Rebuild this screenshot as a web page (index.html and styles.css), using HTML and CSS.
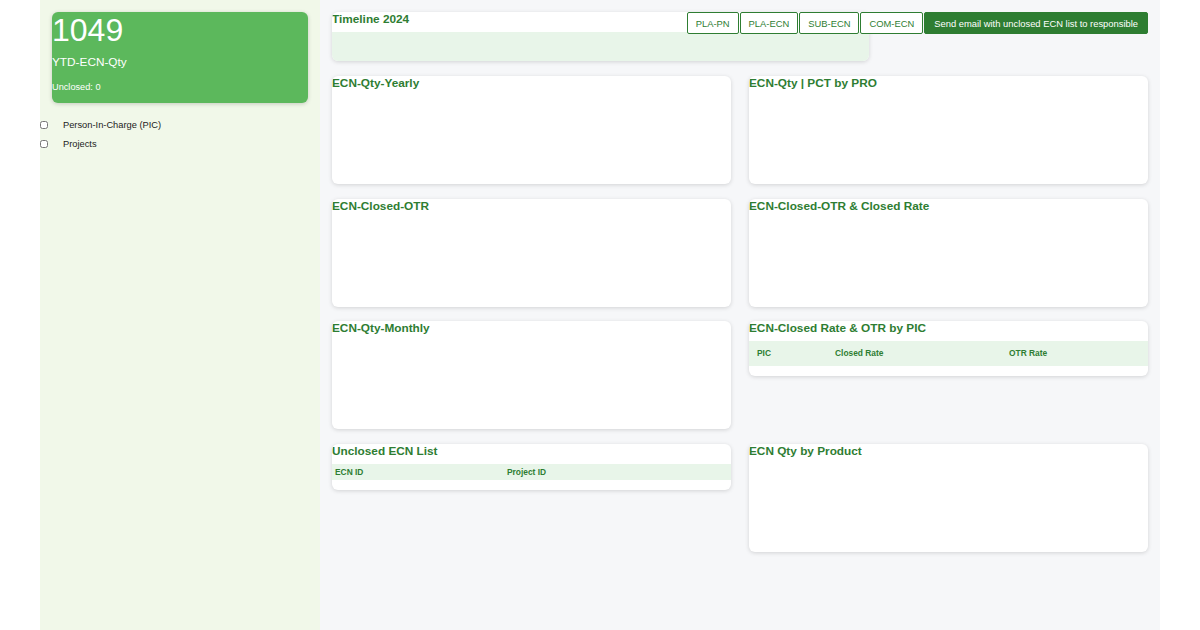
FILE: index.html
```html
<!DOCTYPE html>
<html>
<head>
<meta charset="utf-8">
<link rel="stylesheet" href="styles.css">
</head>
<body>
<div class="app">
  <aside class="sidebar">
    <div class="kpi">
      <div class="kpi-num">1049</div>
      <div class="kpi-label">YTD-ECN-Qty</div>
      <div class="kpi-sub">Unclosed: 0</div>
    </div>
    <div class="filters">
      <label class="filter"><input type="checkbox" class="cb"><span>Person-In-Charge (PIC)</span></label>
      <label class="filter"><input type="checkbox" class="cb"><span>Projects</span></label>
    </div>
  </aside>
  <main class="main">
    <div class="toolbar">
      <button class="btn">PLA-PN</button>
      <button class="btn">PLA-ECN</button>
      <button class="btn">SUB-ECN</button>
      <button class="btn">COM-ECN</button>
      <button class="btn btn-primary">Send email with unclosed ECN list to responsible</button>
    </div>
    <section class="timeline">
      <h3 class="title">Timeline 2024</h3>
      <div class="timeline-body"></div>
    </section>
    <div class="grid">
      <section class="card"><h3 class="title">ECN-Qty-Yearly</h3></section>
      <section class="card"><h3 class="title">ECN-Qty | PCT by PRO</h3></section>
      <section class="card"><h3 class="title">ECN-Closed-OTR</h3></section>
      <section class="card"><h3 class="title">ECN-Closed-OTR &amp; Closed Rate</h3></section>
      <section class="card"><h3 class="title">ECN-Qty-Monthly</h3></section>
      <section class="card card-short">
        <h3 class="title">ECN-Closed Rate &amp; OTR by PIC</h3>
        <table class="tbl tbl-pic">
          <thead><tr><th class="c1">PIC</th><th class="c2">Closed Rate</th><th>OTR Rate</th></tr></thead>
        </table>
      </section>
      <section class="card card-short">
        <h3 class="title">Unclosed ECN List</h3>
        <table class="tbl tbl-list">
          <thead><tr><th class="c1">ECN ID</th><th>Project ID</th></tr></thead>
        </table>
      </section>
      <section class="card"><h3 class="title">ECN Qty by Product</h3></section>
    </div>
  </main>
</div>
</body>
</html>
```

FILE: styles.css
```css
* { box-sizing: border-box; }
html, body { margin: 0; padding: 0; background: #ffffff; }
body { font-family: "Liberation Sans", Arial, sans-serif; }

.app {
  width: 1120px;
  height: 630px;
  margin: 0 auto;
  display: flex;
}

.sidebar {
  width: 280px;
  flex: none;
  background: #f1f8e9;
  padding: 12px 12px 0 0;
}

.kpi {
  margin-left: 12px;
  background: #5cb85c;
  color: #ffffff;
  border-radius: 6px;
  box-shadow: 0 1px 4px rgba(0,0,0,0.18);
  padding: 0 0 10px 0;
  height: 91px;
}
.kpi-num { font-size: 32px; line-height: 36px; }
.kpi-label { font-size: 11.8px; line-height: 16px; margin-top: 6px; }
.kpi-sub { font-size: 9.2px; line-height: 12px; margin-top: 11px; }

.filters { margin-top: 12px; }
.filter {
  display: flex;
  align-items: center;
  height: 19px;
  font-size: 9.3px;
  color: #222;
}
.cb {
  width: 8px;
  height: 8px;
  margin: 0 15px 0 0;
  flex: none;
}

.main {
  flex: 1;
  background: #f6f7f9;
  padding: 12px;
  position: relative;
}

.toolbar {
  position: absolute;
  top: 12px;
  right: 12px;
  display: flex;
}
.btn {
  font-family: "Liberation Sans", Arial, sans-serif;
  font-size: 9.4px;
  height: 22px;
  padding: 0 8px;
  background: #ffffff;
  color: #2e7d32;
  border: 1px solid #2e7d32;
  border-radius: 2px;
  margin: 0 1px 0 0;
  cursor: pointer;
}
.btn-primary {
  background: #2e7d32;
  color: #ffffff;
  padding: 0 9px;
  margin: 0;
}

.title {
  margin: 0 0 5px 0;
  font-size: 11.8px;
  line-height: 14px;
  font-weight: bold;
  color: #2e7d32;
}

.timeline {
  width: 537px;
  height: 49px;
  background: #ffffff;
  border-radius: 6px;
  box-shadow: 0 1px 4px rgba(0,0,0,0.15);
  overflow: hidden;
}
.timeline .title { margin-bottom: 6px; }
.timeline-body {
  height: 29px;
  background: #e8f5e9;
}

.grid {
  margin-top: 15px;
  display: grid;
  grid-template-columns: 399px 399px;
  grid-auto-rows: 108px;
  column-gap: 18px;
  row-gap: 14.5px;
}

.card {
  background: #ffffff;
  border-radius: 6px;
  box-shadow: 0 1px 4px rgba(0,0,0,0.15);
  overflow: hidden;
}
.card-short {
  align-self: start;
  padding-bottom: 10px;
}
.card-short .title { margin-bottom: 6px; }

.tbl {
  width: 100%;
  border-collapse: collapse;
}
.tbl th {
  background: #e8f5e9;
  color: #2e7d32;
  font-size: 8.4px;
  font-weight: bold;
  text-align: left;
}
.tbl-pic th { padding: 7px 8px; line-height: 11px; }
.tbl-pic .c1 { width: 78px; }
.tbl-pic .c2 { width: 174px; }
.tbl-list th { padding: 2px 3px; line-height: 12px; }
.tbl-list .c1 { width: 172px; }
```
